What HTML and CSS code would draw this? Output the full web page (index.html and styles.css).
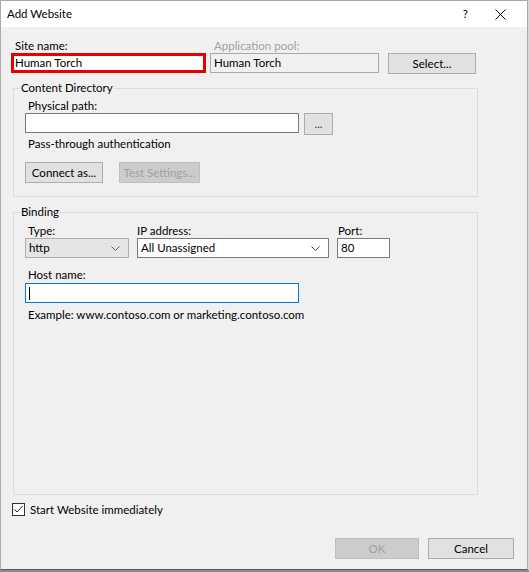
FILE: index.html
```html
<!DOCTYPE html>
<html>
<head>
<meta charset="utf-8">
<link rel="stylesheet" href="styles.css">
</head>
<body>
<div class="window">
  <div class="titlebar">
    <span class="title">Add Website</span>
    <span class="help">?</span>
    <svg class="close" width="11" height="11" viewBox="0 0 11 11"><path d="M0.5 0.5 L10.5 10.5 M10.5 0.5 L0.5 10.5" stroke="#000" stroke-width="1" fill="none"/></svg>
  </div>

  <div class="row-top">
    <div class="col col-site">
      <label class="lbl lbl-site">Site name:</label>
      <div class="input input-site">Human Torch</div>
    </div>
    <div class="col col-pool">
      <label class="lbl lbl-pool disabled">Application pool:</label>
      <div class="input input-pool">Human Torch</div>
    </div>
    <div class="col col-select">
      <span class="lbl">&nbsp;</span>
      <button class="btn btn-select">Select...</button>
    </div>
  </div>

  <div class="group group-content">
    <span class="legend">Content Directory</span>
    <label class="lbl lbl-phys">Physical path:</label>
    <div class="row-path">
      <div class="input input-path"></div>
      <button class="btn btn-dots">...</button>
    </div>
    <div class="lbl lbl-pass">Pass-through authentication</div>
    <div class="row-conn">
      <button class="btn btn-connect">Connect as...</button>
      <button class="btn btn-test" disabled>Test Settings...</button>
    </div>
  </div>

  <div class="group group-binding">
    <span class="legend">Binding</span>
    <div class="row-binding">
      <div class="col">
        <label class="lbl lbl-in">Type:</label>
        <div class="select select-type"><span>http</span>
          <svg class="chev" width="9" height="5" viewBox="0 0 9 5"><path d="M0.5 0.5 L4.5 4.5 L8.5 0.5" stroke="#606060" fill="none"/></svg>
        </div>
      </div>
      <div class="col">
        <label class="lbl lbl-in-ip">IP address:</label>
        <div class="select select-ip"><span>All Unassigned</span>
          <svg class="chev" width="9" height="5" viewBox="0 0 9 5"><path d="M0.5 0.5 L4.5 4.5 L8.5 0.5" stroke="#404040" fill="none"/></svg>
        </div>
      </div>
      <div class="col">
        <label class="lbl lbl-in-port">Port:</label>
        <div class="input input-port">80</div>
      </div>
    </div>
    <label class="lbl lbl-host">Host name:</label>
    <div class="input input-host"><span class="caret"></span></div>
    <div class="lbl lbl-example">Example: www.contoso.com or marketing.contoso.com</div>
  </div>

  <div class="row-check">
    <span class="checkbox">
      <svg width="11" height="11" viewBox="0 0 11 11"><path d="M1.5 5.5 L4 8 L9.5 2" stroke="#222" stroke-width="1" fill="none"/></svg>
    </span>
    <span class="check-label">Start Website immediately</span>
  </div>

  <div class="row-buttons">
    <button class="btn btn-ok" disabled>OK</button>
    <button class="btn btn-cancel">Cancel</button>
  </div>
</div>
<div class="below"></div>
</body>
</html>
```
FILE: styles.css
```css
html, body {
  margin: 0;
  padding: 0;
  background: #d8d8d8;
}
body {
  font-family: "Segoe UI", "Lato", "Noto Sans", sans-serif;
  font-size: 11.5px;
  color: #000;
  width: 529px;
  height: 572px;
  overflow: hidden;
}
.window {
  width: 528px;
  height: 570px;
  box-sizing: border-box;
  border: 1px solid #aaaaaa;
  border-bottom-color: #5a5a5a;
  background: #f0f0f0;
  display: flex;
  flex-direction: column;
}
.titlebar {
  height: 26px;
  background: #fff;
  display: flex;
  align-items: center;
  padding-left: 6px;
  flex-shrink: 0;
}
.title {
  flex: 1;
  line-height: 16px;
}
.help {
  margin-right: 27px;
  line-height: 16px;
}
.close {
  margin-right: 21px;
}
.lbl {
  display: block;
  line-height: 15px;
  white-space: nowrap;
}
.disabled { color: #a0a0a0; }

.row-top {
  display: flex;
  align-items: flex-start;
  margin-top: 11px;
  margin-left: 10px;
}
.col {
  display: flex;
  flex-direction: column;
}
.lbl-site { padding-left: 4px; }
.lbl-pool { padding-left: 4px; }
.input {
  box-sizing: border-box;
  height: 20px;
  background: #fff;
  border: 1px solid #7a7a7a;
  line-height: 18px;
  padding-left: 3px;
  white-space: nowrap;
}
.input-site {
  width: 195px;
  border: 3px solid #e60000;
  line-height: 14px;
  padding-left: 1px;
}
.col-pool { margin-left: 4px; }
.input-pool {
  width: 169px;
  background: #f0f0f0;
  border-color: #a8a8a8;
  line-height: 17px;
}
.col-select { margin-left: 9px; }
.btn {
  box-sizing: border-box;
  font-family: inherit;
  font-size: 11.5px;
  color: #000;
  background: #e1e1e1;
  border: 1px solid #adadad;
  padding: 0;
  height: 21px;
  line-height: 18px;
  white-space: nowrap;
}
.btn:disabled {
  background: #cccccc;
  border-color: #bfbfbf;
  color: #a0a0a0;
}
.btn-select { width: 88px; height: 21px; }

.group {
  position: relative;
  box-sizing: border-box;
  border: 1px solid #dcdcdc;
  margin-left: 12px;
  width: 465px;
}
.legend {
  position: absolute;
  top: -9px;
  left: 6px;
  background: #f0f0f0;
  padding: 0 1px;
  line-height: 15px;
}
.group-content {
  margin-top: 14px;
  padding: 10px 0 13px 11px;
}
.lbl-phys { padding-left: 3px; line-height: 14px; }
.row-path {
  display: flex;
  align-items: flex-start;
}
.input-path { width: 274px; }
.btn-dots {
  width: 29px;
  height: 22px;
  margin-left: 5px;
  line-height: 16px;
  color: #333;
}
.lbl-pass { padding-left: 3px; margin-top: 1px; }
.row-conn {
  display: flex;
  margin-top: 11px;
}
.btn-connect { width: 78px; }
.btn-test { width: 81px; margin-left: 16px; }

.group-binding {
  margin-top: 15px;
  height: 283px;
  padding: 10px 0 0 11px;
}
.row-binding {
  display: flex;
  align-items: flex-start;
}
.lbl-in { padding-left: 3px; }
.lbl-in-ip { padding-left: 0; }
.lbl-in-port { padding-left: 1px; }
.select {
  box-sizing: border-box;
  height: 20px;
  display: flex;
  align-items: center;
  justify-content: space-between;
  padding: 0 8px 1px 3px;
  border: 1px solid #adadad;
  background: #e5e5e5;
}
.select .chev { margin-top: 1px; }
.select-type { width: 104px; }
.select-ip {
  width: 192px;
  margin-left: 8px;
  background: #fff;
  border-color: #7a7a7a;
}
.row-binding .col:nth-child(2) .lbl { margin-left: 8px; }
.row-binding .col:nth-child(3) { margin-left: 8px; }
.input-port { width: 53px; line-height: 17px; }
.lbl-host { padding-left: 3px; margin-top: 9px; line-height: 16px; }
.input-host {
  width: 274px;
  border-color: #0078d7;
  display: flex;
  align-items: center;
}
.caret {
  display: inline-block;
  width: 1px;
  height: 13px;
  background: #000;
}
.lbl-example { padding-left: 3px; margin-top: 4px; }

.row-check {
  display: flex;
  align-items: center;
  margin-top: 7px;
  margin-left: 11px;
  height: 15px;
}
.checkbox {
  box-sizing: border-box;
  width: 13px;
  height: 13px;
  border: 1px solid #333;
  background: #fff;
  display: flex;
  align-items: center;
  justify-content: center;
}
.check-label { margin-left: 5px; line-height: 14px; }

.row-buttons {
  display: flex;
  justify-content: flex-end;
  margin-top: 21px;
  padding-right: 13px;
}
.btn-ok { width: 84px; }
.btn-cancel { width: 86px; margin-left: 9px; }

.below {
  height: 2px;
  background: #8a8a8a;
}
```
